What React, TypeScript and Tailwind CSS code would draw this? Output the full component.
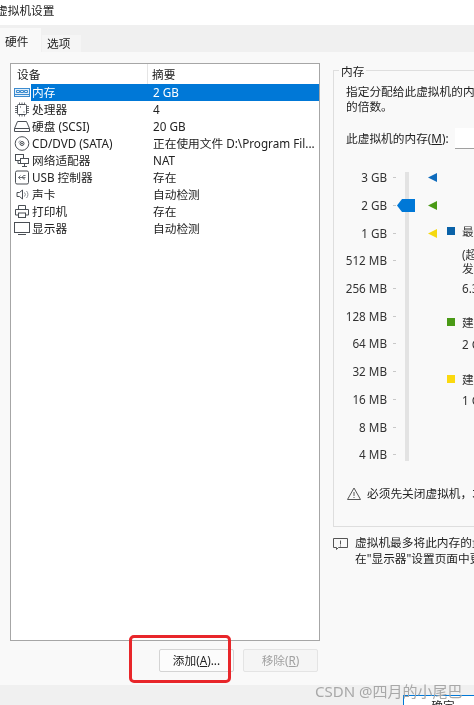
import React from "react";

const iconClass = "w-[16px] h-[15px] text-[#4a4f55]";

function MemoryIcon() {
  return (
    <svg viewBox="0 0 16 15" className={iconClass} fill="none" stroke="#3d8ccf" strokeWidth="1">
      <rect x="0.5" y="3.5" width="15" height="8" fill="#e3eff9" />
      <path d="M2.500 5.500h3v2h-3zM6.500 5.500h3v2h-3zM10.500 5.500h3v2h-3zM0.500 9.500h15" />
    </svg>
  );
}

function CpuIcon() {
  return (
    <svg viewBox="0 0 16 15" className={iconClass} fill="none" stroke="currentColor" strokeWidth="1">
      <rect x="3.5" y="2.5" width="9" height="10" rx="1" />
      <path d="M6 5h1M9.500 10h1" />
      <path d="M1 4.500h2M1 6.500h2M1 8.500h2M1 10.500h2M13 4.500h2M13 6.500h2M13 8.500h2M13 10.500h2M5.500 0.500v2M8 0.500v2M10.500 0.500v2M5.500 12.500v2M8 12.500v2M10.500 12.500v2" strokeWidth="0.8" />
    </svg>
  );
}

function DiskIcon() {
  return (
    <svg viewBox="0 0 16 15" className={iconClass} fill="none" stroke="currentColor" strokeWidth="1">
      <path d="M3.500 2.500h9l3 7v3h-15v-3zM0.500 9.500h15" />
    </svg>
  );
}

function CdIcon() {
  return (
    <svg viewBox="0 0 16 15" className={iconClass} fill="none" stroke="currentColor" strokeWidth="1">
      <circle cx="8" cy="7.500" r="6.800" />
      <circle cx="8" cy="7.500" r="2" />
      <path d="M4.500 6.500a3.600 3.600 0 0 1 2-2" stroke="#9aa0a6" />
      <circle cx="8" cy="7.500" r="0.500" fill="currentColor" />
    </svg>
  );
}

function NetworkIcon() {
  return (
    <svg viewBox="0 0 16 15" className={iconClass} fill="none" stroke="currentColor" strokeWidth="1">
      <rect x="1.500" y="1.500" width="8" height="6" />
      <rect x="6.500" y="5.500" width="8" height="5" fill="#fff" />
      <path d="M10.500 10.500v3M8 13.500h5M4 7.500v3h2.500" />
    </svg>
  );
}

function UsbIcon() {
  return (
    <svg viewBox="0 0 16 15" className={iconClass} fill="none" stroke="currentColor" strokeWidth="1">
      <rect x="1.500" y="1" width="13" height="13" rx="1.500" />
      <path d="M4.500 7.500h7M4.500 7.500l2-2M4.500 7.500l2 2M8 7.500l1.500-2h2M8.500 7.500l1 1.500h1.500" strokeWidth="0.8" />
    </svg>
  );
}

function SoundIcon() {
  return (
    <svg viewBox="0 0 16 15" className={iconClass} fill="none" stroke="currentColor" strokeWidth="1">
      <path d="M3 5.500h2.500l3-2.500v9l-3-2.500H3z" />
      <path d="M10.500 5.500a3 3 0 0 1 0 4M12.500 4a5 5 0 0 1 0 7" stroke="#8a8f94" />
    </svg>
  );
}

function PrinterIcon() {
  return (
    <svg viewBox="0 0 16 15" className={iconClass} fill="none" stroke="currentColor" strokeWidth="1">
      <path d="M4.500 5V1.500h7V5M4.500 11h-3V5.500h13V11h-3" />
      <rect x="4.500" y="9" width="7" height="4.500" />
    </svg>
  );
}

function MonitorIcon() {
  return (
    <svg viewBox="0 0 16 15" className={iconClass} fill="none" stroke="currentColor" strokeWidth="1">
      <rect x="0.500" y="1.500" width="15" height="10" />
      <path d="M4 13.500h8" />
    </svg>
  );
}

const devices = [
  { name: "内存", summary: "2 GB", icon: <MemoryIcon />, selected: true },
  { name: "处理器", summary: "4", icon: <CpuIcon /> },
  { name: "硬盘 (SCSI)", summary: "20 GB", icon: <DiskIcon /> },
  { name: "CD/DVD (SATA)", summary: "正在使用文件 D:\\Program Fil...", icon: <CdIcon /> },
  { name: "网络适配器", summary: "NAT", icon: <NetworkIcon /> },
  { name: "USB 控制器", summary: "存在", icon: <UsbIcon /> },
  { name: "声卡", summary: "自动检测", icon: <SoundIcon /> },
  { name: "打印机", summary: "存在", icon: <PrinterIcon /> },
  { name: "显示器", summary: "自动检测", icon: <MonitorIcon /> },
];

const scale = ["3 GB", "2 GB", "1 GB", "512 MB", "256 MB", "128 MB", "64 MB", "32 MB", "16 MB", "8 MB", "4 MB"];

function Triangle({ color }: { color: string }) {
  return (
    <svg viewBox="0 0 8 8" className="w-[9px] h-[9px]">
      <path d="M0 4L8 0V8Z" fill={color} />
    </svg>
  );
}

export default function App() {
  return (
    <div className="relative w-[474px] h-[705px] overflow-hidden flex flex-col bg-white text-[11.7px] leading-[15px] text-[#222] blur-[0.3px] font-['Noto_Sans','Noto_Sans_CJK_SC',sans-serif]">
      {/* Title bar */}
      <div className="h-[25px] shrink-0 -ml-[4px] pt-[3px] whitespace-nowrap">虚拟机设置</div>

      {/* Tabs */}
      <div className="h-[27px] shrink-0 bg-[#f0f0f0] flex items-end">
        <div className="w-[41px] h-[24px] bg-[#f9f9f9] pl-[5px] pt-[6px]">硬件</div>
        <div className="w-[39px] h-[17px] ml-[1px] bg-[#f5f5f5] pl-[5px] pt-[1px]">选项</div>
      </div>

      {/* Main */}
      <div className="flex-1 bg-[#f9f9f9] flex min-h-0">
        <div className="w-[310px] ml-[10px] pt-[11px] shrink-0 flex flex-col">
          <div className="h-[578px] bg-white border border-[#a6a6a6] whitespace-nowrap">
            <div className="h-[20px] flex items-center">
              <div className="w-[137px] pl-[6px] h-full flex items-center border-r border-[#e5e5e5]">设备</div>
              <div className="pl-[4px]">摘要</div>
            </div>
            {devices.map((d) => (
              <div key={d.name} className="h-[17px] flex">
                <div className="w-[20px] pl-[3px] flex items-center shrink-0">{d.icon}</div>
                <div className={`flex-1 flex items-center pl-[1px] ${d.selected ? "bg-[#0078d7] text-white" : ""}`}>
                  <div className="w-[121px]">{d.name}</div>
                  <div>{d.summary}</div>
                </div>
              </div>
            ))}
          </div>
          <div className="mt-[8px] flex justify-end gap-[9px] pr-[2px]">
            <button className="w-[75px] h-[23px] bg-[#fcfcfc] border border-[#d4d4d4] rounded-[2px]">
              添加(<span className="underline">A</span>)...
            </button>
            <button className="w-[75px] h-[23px] bg-[#f5f5f5] border border-[#e4e4e4] rounded-[2px] text-[#a0a0a0]">
              移除(<span className="underline">R</span>)
            </button>
          </div>
        </div>

        {/* Memory panel */}
        <div className="ml-[13px] w-[200px] shrink-0 pt-[18px] whitespace-nowrap">
          <div className="relative h-[457px] border border-[#dedede] pl-[12px] pt-[13px]">
            <div className="absolute left-[5px] -top-[7px] bg-[#f9f9f9] px-[2px]">内存</div>
            <div>指定分配给此虚拟机的内存量。内存大小必须为 4 MB</div>
            <div>的倍数。</div>
            <div className="mt-[14px] h-[21px] flex items-center">
              <span>此虚拟机的内存(<span className="underline">M</span>):</span>
              <div className="ml-[6px] w-[60px] h-[21px] bg-white border-b border-[#a0a0a0] shrink-0" />
            </div>

            <div className="relative mt-[15px] -ml-[12px] flex text-[#333]">
              <div className="w-[62px] shrink-0">
                {scale.map((s) => (
                  <div key={s} className="h-[27.7px] flex items-center justify-end">
                    <span>{s}</span>
                    <span className="w-[3px] h-px ml-[6px] bg-[#c8c8c8]" />
                  </div>
                ))}
              </div>
              <div className="w-[4px] ml-[9px] mt-[8px] mb-[8px] bg-[#e3e3e3] shrink-0" />
              <svg viewBox="0 0 18 13" className="absolute left-[63px] top-[35px] w-[18px] h-[13px]">
                <path d="M0 6.500L5 0H18V13H5Z" fill="#0078d7" />
              </svg>
              <div className="ml-[19px] w-[9px] shrink-0">
                {["#0f6cbd", "#4a9a16", "#f5d90f"].map((c) => (
                  <div key={c} className="h-[27.7px] flex items-center">
                    <Triangle color={c} />
                  </div>
                ))}
              </div>
              <div className="ml-[10px] pt-[59px] leading-[16px]">
                <div className="flex items-center gap-[7px]">
                  <span className="w-[8px] h-[8px] bg-[#0a62a8] shrink-0" />
                  <span>最大建议内存</span>
                </div>
                <div className="ml-[15px] mt-[8px] leading-[14px]">
                  <div>(超出此大小可能</div>
                  <div>发生内存交换。)</div>
                </div>
                <div className="ml-[15px] mt-[5px]">6.3 GB</div>
                <div className="mt-[18px] flex items-center gap-[7px]">
                  <span className="w-[8px] h-[8px] bg-[#4a9a16] shrink-0" />
                  <span>建议内存</span>
                </div>
                <div className="ml-[15px] mt-[6px]">2 GB</div>
                <div className="mt-[19px] flex items-center gap-[7px]">
                  <span className="w-[8px] h-[8px] bg-[#fbd90f] shrink-0" />
                  <span>建议的最小内存</span>
                </div>
                <div className="ml-[15px] mt-[5px]">1 GB</div>
              </div>
            </div>

            <div className="mt-[17px] ml-[1px] flex items-center gap-[6px]">
              <svg viewBox="0 0 14 13" className="w-[14px] h-[13px] shrink-0" fill="none" stroke="#555" strokeWidth="1">
                <path d="M7 1L13.500 12.500H0.500Z" />
                <path d="M7 5v4M7 10v1" />
              </svg>
              <span>必须先关闭虚拟机，才能更改此设置。</span>
            </div>
          </div>

          <div className="mt-[7px] flex gap-[7px]">
            <svg viewBox="0 0 15 14" className="w-[15px] h-[14px] mt-[3px] shrink-0" fill="none" stroke="#555" strokeWidth="1">
              <path d="M0.500 1.500h14v9h-9l-2 2v-2h-3z" />
              <path d="M7.500 3.500v4M7.500 8.500v1" />
            </svg>
            <div className="leading-[16px]">
              <div>虚拟机最多将此内存的量用于图形</div>
              <div>在"显示器"设置页面中更改</div>
            </div>
          </div>
        </div>
      </div>

      {/* Footer */}
      <div className="h-[20px] shrink-0 bg-[#f0f0f0] pl-[403px] pt-[10px] overflow-hidden">
        <div className="w-[80px] h-[23px] bg-white border border-[#0078d7] text-center pt-[2px]">确定</div>
      </div>

      {/* Red annotation */}
      <div className="absolute left-[129px] top-[635px] w-[102px] h-[48px] border-[3px] border-[#e8262a] rounded-[5px]" />

      {/* Watermark */}
      <div className="absolute left-[315px] top-[681px] text-[15px] leading-[20px] text-[#a8a8a8] whitespace-nowrap">CSDN @四月的小尾巴</div>
    </div>
  );
}
